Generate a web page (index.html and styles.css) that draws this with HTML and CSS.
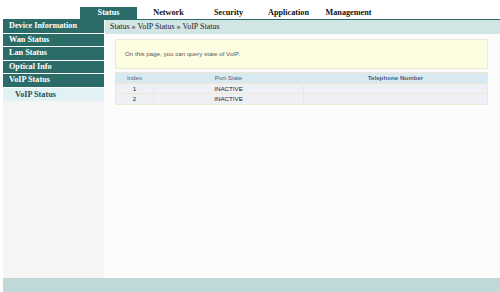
FILE: index.html
```html
<!DOCTYPE html>
<html>
<head>
<meta charset="utf-8">
<link rel="stylesheet" href="styles.css">
</head>
<body>
<div class="page">
  <div class="header">
    <div class="nav">
      <div class="tab active">Status</div>
      <div class="tab">Network</div>
      <div class="tab">Security</div>
      <div class="tab">Application</div>
      <div class="tab">Management</div>
    </div>
  </div>
  <div class="main">
    <div class="sidebar">
      <div class="item">Device Information</div>
      <div class="item">Wan Status</div>
      <div class="item">Lan Status</div>
      <div class="item">Optical Info</div>
      <div class="item">VoIP Status</div>
      <div class="sub">VoIP Status</div>
    </div>
    <div class="content">
      <div class="crumb">Status &raquo; VoIP Status &raquo; VoIP Status</div>
      <div class="body">
        <div class="info">On this page, you can query state of VoIP.</div>
        <table class="grid">
          <tr class="head"><th class="c1">Index</th><th class="c2">Port State</th><th class="c3 bold">Telephone Number</th></tr>
          <tr><td>1</td><td>INACTIVE</td><td></td></tr>
          <tr><td>2</td><td>INACTIVE</td><td></td></tr>
        </table>
      </div>
    </div>
  </div>
  <div class="footer"></div>
</div>
</body>
</html>
```
FILE: styles.css
```css
html, body { margin: 0; padding: 0; background: #ffffff; }
.page {
  margin-left: 3px;
  width: 497px;
  height: 292px;
  display: flex;
  flex-direction: column;
}
.header {
  height: 20px;
  display: flex;
  align-items: flex-end;
}
.nav {
  display: flex;
  align-items: flex-end;
  padding-left: 75.5px;
  flex: 1;
  border-bottom: 1px solid #2b6c69;
  box-sizing: border-box;
  height: 13px;
}
.tab {
  font-family: "Liberation Serif", serif;
  font-weight: bold;
  font-size: 8.2px;
  color: #111;
  width: 60px;
  flex: none;
  text-align: center;
  height: 12px;
  line-height: 11px;
  white-space: nowrap;
}
.tab.active {
  background: #2b6c69;
  background-clip: content-box;
  color: #ffffff;
  padding: 0 1.5px;
  box-sizing: border-box;
  height: 13px;
  margin-bottom: -1px;
  line-height: 12px;
}
.main {
  flex: 1;
  display: flex;
  min-height: 0;
}
.sidebar {
  width: 101px;
  background: #f5f5f5;
  margin-right: 1px;
}
.item {
  background: #2b6c69;
  color: #ffffff;
  font-family: "Liberation Serif", serif;
  font-weight: bold;
  font-size: 8.2px;
  height: 12.5px;
  line-height: 12.5px;
  padding-left: 6px;
  border-bottom: 1px solid #ffffff;
}
.sub {
  background: #e2f1f3;
  color: #1f4f55;
  font-family: "Liberation Serif", serif;
  font-weight: bold;
  font-size: 8.2px;
  height: 13px;
  line-height: 13px;
  padding-left: 12px;
}
.content {
  flex: 1;
  background: #fcfcfc;
  display: flex;
  flex-direction: column;
}
.crumb {
  background: #d2e5e5;
  height: 14px;
  line-height: 14px;
  font-family: "Liberation Serif", serif;
  font-size: 8px;
  color: #222;
  padding-left: 5px;
}
.body {
  padding: 5px 12px 0 10px;
}
.info {
  background: #fdfde2;
  border: 1px solid #ebebd2;
  height: 28px;
  line-height: 28px;
  font-family: "Liberation Sans", sans-serif;
  font-size: 6.2px;
  color: #555;
  padding-left: 9px;
}
.grid {
  margin-top: 3px;
  width: 100%;
  border-collapse: collapse;
  font-family: "Liberation Sans", sans-serif;
  font-size: 6.2px;
  color: #222;
}
.grid td, .grid th {
  border: 1px solid #efe9d4;
  height: 9.5px;
  padding: 0;
  text-align: center;
  line-height: 9px;
}
.grid td { background: #eef0f5; }
.grid th {
  background: #d9e9f1;
  font-weight: normal;
  color: #4e5f80;
}
.grid th.bold { font-weight: bold; }
.c1 { width: 37px; }
.c2 { width: 149px; }
.footer {
  height: 14px;
  background: #c1d8d8;
}
```
